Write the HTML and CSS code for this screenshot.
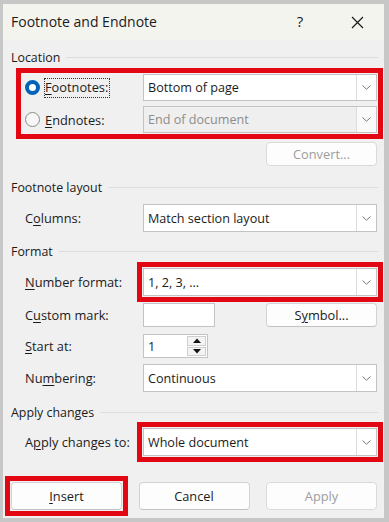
FILE: index.html
```html
<!DOCTYPE html>
<html>
<head>
<meta charset="utf-8">
<link rel="stylesheet" href="styles.css">
</head>
<body>
<div class="dialog">
  <div class="titlebar">
    <span class="title">Footnote and Endnote</span>
    <span class="cap help">?</span>
    <span class="cap close"><svg width="13" height="13" viewBox="0 0 13 13"><path d="M1 1 L12 12 M12 1 L1 12" stroke="#1b1b1b" stroke-width="1.2" fill="none"/></svg></span>
  </div>
  <div class="content">
    <div class="section s-location"><span>Location</span></div>
    <div class="loc-group mark">
      <div class="row">
        <div class="radio-label"><span class="radio on"></span><span class="focus"><u>F</u>ootnotes:</span></div>
        <div class="select"><span class="value">Bottom of page</span><span class="arrow"><svg width="9" height="5" viewBox="0 0 9 5"><path d="M0.5 0.5 L4.5 4.2 L8.5 0.5" stroke="#777" stroke-width="1" fill="none"/></svg></span></div>
      </div>
      <div class="row">
        <div class="radio-label"><span class="radio"></span><span class="plain"><u>E</u>ndnotes:</span></div>
        <div class="select disabled"><span class="value">End of document</span><span class="arrow"><svg width="9" height="5" viewBox="0 0 9 5"><path d="M0.5 0.5 L4.5 4.2 L8.5 0.5" stroke="#777" stroke-width="1" fill="none"/></svg></span></div>
      </div>
    </div>
    <div class="btn-right"><span class="btn small disabled">Convert...</span></div>

    <div class="section s-layout"><span>Footnote layout</span></div>
    <div class="row field r-columns">
      <span class="label">C<u>o</u>lumns:</span>
      <div class="select"><span class="value">Match section layout</span><span class="arrow"><svg width="9" height="5" viewBox="0 0 9 5"><path d="M0.5 0.5 L4.5 4.2 L8.5 0.5" stroke="#777" stroke-width="1" fill="none"/></svg></span></div>
    </div>

    <div class="section s-format"><span>Format</span></div>
    <div class="row field r-number">
      <span class="label"><u>N</u>umber format:</span>
      <div class="select mark"><span class="value">1, 2, 3, …</span><span class="arrow"><svg width="9" height="5" viewBox="0 0 9 5"><path d="M0.5 0.5 L4.5 4.2 L8.5 0.5" stroke="#777" stroke-width="1" fill="none"/></svg></span></div>
    </div>
    <div class="row field r-custom">
      <span class="label">C<u>u</u>stom mark:</span>
      <div class="custom-line"><span class="textbox"></span><span class="btn small">S<u>y</u>mbol...</span></div>
    </div>
    <div class="row field r-start">
      <span class="label"><u>S</u>tart at:</span>
      <div class="spin"><span class="spin-value">1</span><span class="spin-btns"><span class="spin-btn"><svg width="8" height="5" viewBox="0 0 8 5"><path d="M0 5 L4 0.5 L8 5 Z" fill="#111"/></svg></span><span class="spin-btn"><svg width="8" height="5" viewBox="0 0 8 5"><path d="M0 0 L4 4.5 L8 0 Z" fill="#111"/></svg></span></span></div>
    </div>
    <div class="row field r-numbering">
      <span class="label">Nu<u>m</u>bering:</span>
      <div class="select"><span class="value">Continuous</span><span class="arrow"><svg width="9" height="5" viewBox="0 0 9 5"><path d="M0.5 0.5 L4.5 4.2 L8.5 0.5" stroke="#777" stroke-width="1" fill="none"/></svg></span></div>
    </div>

    <div class="section s-apply"><span>Apply changes</span></div>
    <div class="row field r-applyto">
      <span class="label">A<u>p</u>ply changes to:</span>
      <div class="select mark"><span class="value">Whole document</span><span class="arrow"><svg width="9" height="5" viewBox="0 0 9 5"><path d="M0.5 0.5 L4.5 4.2 L8.5 0.5" stroke="#777" stroke-width="1" fill="none"/></svg></span></div>
    </div>

    <div class="footer">
      <span class="mark-box mark"><span class="btn big"><u>I</u>nsert</span></span>
      <span class="btn big">Cancel</span>
      <span class="btn big disabled">Apply</span>
    </div>
  </div>
</div>
</body>
</html>
```

FILE: styles.css
```css
* { box-sizing: border-box; }
html, body { margin: 0; padding: 0; }
body {
  width: 389px;
  height: 522px;
  overflow: hidden;
  background: #c7c7c7;
  font-family: "Open Sans", "Noto Sans", sans-serif;
  color: #1b1b1b;
}
u { text-decoration: underline; text-underline-offset: 2px; text-decoration-thickness: 1px; }

.dialog {
  margin: 4px 5px 4px 3px;
  height: 514px;
  background: #f0f0f0;
  display: flex;
  flex-direction: column;
}

.titlebar {
  height: 36px;
  background: #f4f4ef;
  display: flex;
  align-items: center;
}
.title { flex: 1; padding-left: 8px; font-size: 14px; padding-bottom: 2px; }
.cap { width: 46px; height: 36px; display: flex; align-items: center; justify-content: center; }
.help { font-size: 15px; padding-bottom: 2px; }
.close { margin-left: 11px; margin-right: 4px; }

.content {
  flex: 1;
  padding: 0 7px 0 8px;
  display: flex;
  flex-direction: column;
}

.section {
  display: flex;
  align-items: center;
  gap: 6px;
  height: 18px;
  font-size: 12.4px;
}
.section::after {
  content: "";
  flex: 1;
  height: 1px;
  background: #dddddd;
  margin-right: -1px;
}
.s-location { margin-top: 8px; }
.s-layout { margin-top: 12px; }
.s-format { margin-top: 10px; }
.s-apply { margin-top: 11px; }

.mark { outline: 5px solid #e30613; outline-offset: 1px; }

.row {
  display: grid;
  grid-template-columns: 118px 1fr;
  align-items: center;
  font-size: 12.8px;
}
.field { padding-left: 14px; }

.loc-group {
  margin-top: 8px;
  margin-left: 11px;
  padding-left: 3px;
  display: flex;
  flex-direction: column;
  gap: 5px;
}
.loc-group .select { height: 27px; }

.radio-label { display: flex; align-items: center; gap: 4px; }
.radio {
  width: 15px;
  height: 15px;
  border-radius: 50%;
  border: 1px solid #8a8a8a;
  background: #f7f7f7;
  flex: none;
}
.radio.on {
  border: 4.5px solid #0063b8;
  background: #ffffff;
}
.focus { border: 1px dotted #333; padding: 0 1px 1px 0; line-height: 17px; }
.plain { padding-left: 1px; }

.select {
  height: 28px;
  background: #ffffff;
  border: 1px solid #c3c3c3;
  display: flex;
  align-items: stretch;
}
.select .value {
  flex: 1;
  display: flex;
  align-items: center;
  padding-left: 4px;
  font-size: 12.6px;
}
.select .arrow {
  width: 20px;
  border-left: 1px solid #dcdcdc;
  display: flex;
  align-items: center;
  justify-content: center;
}
.select.disabled { background: #efefef; }
.select.disabled .value { color: #8d8d8d; }
.select.disabled .arrow { background: #fafafa; }

.btn {
  display: flex;
  align-items: center;
  justify-content: center;
  background: #fdfdfd;
  border: 1px solid #d3d3d3;
  border-bottom-color: #c2c2c2;
  border-radius: 4px;
  font-size: 12.8px;
  color: #1b1b1b;
}
.btn.disabled { color: #9c9c9c; border-color: #dadada; }
.btn.small { width: 111px; height: 24px; }
.btn.big { width: 111px; height: 28px; }
.mark-box { display: flex; }

.btn-right { margin-top: 9px; display: flex; justify-content: flex-end; }

.r-columns { margin-top: 8px; }
.r-number { margin-top: 8px; }
.r-custom { margin-top: 7px; }
.r-start { margin-top: 7px; }
.r-numbering { margin-top: 6px; }
.r-applyto { margin-top: 7px; }

.custom-line { display: flex; justify-content: space-between; align-items: center; }
.textbox { width: 72px; height: 24px; background: #ffffff; border: 1px solid #c3c3c3; }

.spin {
  width: 65px;
  height: 24px;
  background: #ffffff;
  border: 1px solid #c3c3c3;
  display: flex;
}
.spin-value { flex: 1; padding-left: 4px; font-size: 12.6px; display: flex; align-items: center; }
.spin-btns { width: 20px; display: flex; flex-direction: column; padding: 1px 1px 1px 0; gap: 1px; }
.spin-btn {
  flex: 1;
  border: 1px solid #cfcfcf;
  background: #f4f4f4;
  display: flex;
  align-items: center;
  justify-content: center;
}

.footer {
  margin-top: 26px;
  display: flex;
  justify-content: space-between;
}
```
